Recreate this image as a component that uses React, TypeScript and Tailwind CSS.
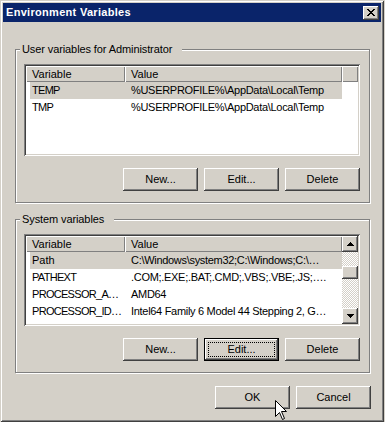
import React from "react";

const raised =
  "bg-[#d4d0c8] shadow-[inset_-1px_-1px_#404040,inset_1px_1px_#fff,inset_-2px_-2px_#808080,inset_2px_2px_#d4d0c8]";

type Row = { name: string; value: string };

const userRows: Row[] = [
  { name: "TEMP", value: "%USERPROFILE%\\AppData\\Local\\Temp" },
  { name: "TMP", value: "%USERPROFILE%\\AppData\\Local\\Temp" },
];

const systemRows: Row[] = [
  { name: "Path", value: "C:\\Windows\\system32;C:\\Windows;C:\\…" },
  { name: "PATHEXT", value: ".COM;.EXE;.BAT;.CMD;.VBS;.VBE;.JS;…." },
  { name: "PROCESSOR_A…", value: "AMD64" },
  { name: "PROCESSOR_ID…", value: "Intel64 Family 6 Model 44 Stepping 2, G…" },
];

function Button({ label, focused }: { label: string; focused?: boolean }) {
  if (focused) {
    return (
      <button
        type="button"
        className="relative flex h-[23px] w-[75px] items-center justify-center border border-black bg-[#d4d0c8] leading-[13px] shadow-[inset_-1px_-1px_#404040,inset_1px_1px_#fff,inset_-2px_-2px_#808080]"
      >
        <span className="pointer-events-none absolute inset-[3px] border border-dotted border-black" />
        {label}
      </button>
    );
  }
  return (
    <button
      type="button"
      className={`flex h-[23px] w-[75px] items-center justify-center leading-[13px] ${raised}`}
    >
      {label}
    </button>
  );
}

function HeaderCell({ label, className }: { label: string; className: string }) {
  return (
    <div
      className={`h-[16px] bg-[#d4d0c8] pl-[6px] leading-[16px] shadow-[inset_1px_1px_#fff,inset_-1px_-1px_#808080] ${className}`}
    >
      {label}
    </div>
  );
}

function ListRow({ row, selected }: { row: Row; selected: boolean }) {
  // Tahoma caps are narrower than Liberation Sans, so tighten upper-case names
  const caps = row.name === row.name.toUpperCase();
  return (
    <div className="flex h-[17px] w-[316px] leading-[17px]">
      <div
        className={
          selected
            ? "ml-[4px] flex w-[312px] bg-[#d4d0c8]"
            : "flex w-[316px]"
        }
      >
        <div
          className={`overflow-hidden whitespace-nowrap ${
            selected ? "w-[95px] pl-[2px]" : "w-[99px] pl-[6px]"
          } ${caps ? "tracking-[-0.7px]" : ""}`}
        >
          {row.name}
        </div>
        <div className="w-[217px] overflow-hidden whitespace-nowrap pl-[6px] tracking-[-0.3px]">
          {row.value}
        </div>
      </div>
    </div>
  );
}

function Arrow({ down }: { down?: boolean }) {
  return (
    <svg width="7" height="4" viewBox="0 0 7 4" shapeRendering="crispEdges">
      {down ? (
        <g fill="#000">
          <rect x="0" y="0" width="7" height="1" />
          <rect x="1" y="1" width="5" height="1" />
          <rect x="2" y="2" width="3" height="1" />
          <rect x="3" y="3" width="1" height="1" />
        </g>
      ) : (
        <g fill="#000">
          <rect x="3" y="0" width="1" height="1" />
          <rect x="2" y="1" width="3" height="1" />
          <rect x="1" y="2" width="5" height="1" />
          <rect x="0" y="3" width="7" height="1" />
        </g>
      )}
    </svg>
  );
}

function ScrollBar() {
  return (
    <div className="flex w-[16px] flex-col">
      <div className={`flex h-[16px] items-center justify-center ${raised}`}>
        <Arrow />
      </div>
      <div className="flex flex-1 flex-col bg-[repeating-conic-gradient(#d4d0c8_0_25%,#fff_0_50%)] bg-[length:2px_2px] pt-[14px]">
        <div className={`h-[13px] ${raised}`} />
      </div>
      <div className={`flex h-[16px] items-center justify-center ${raised}`}>
        <Arrow down />
      </div>
    </div>
  );
}

function ListView({ rows, scroll }: { rows: Row[]; scroll?: boolean }) {
  return (
    <div className="flex h-[92px] w-[336px] overflow-hidden bg-white p-[2px] shadow-[inset_1px_1px_#808080,inset_-1px_-1px_#fff,inset_2px_2px_#404040,inset_-2px_-2px_#d4d0c8]">
      <div className="flex flex-1 flex-col overflow-hidden">
        <div className="flex">
          <HeaderCell label="Variable" className="w-[99px]" />
          <HeaderCell label="Value" className="w-[217px]" />
          {!scroll && <HeaderCell label="" className="flex-1" />}
        </div>
        {rows.map((r, i) => (
          <ListRow key={r.name} row={r} selected={i === 0} />
        ))}
      </div>
      {scroll && <ScrollBar />}
    </div>
  );
}

function GroupBox({
  title,
  rows,
  scroll,
  focusEdit,
  className = "",
}: {
  title: string;
  rows: Row[];
  scroll?: boolean;
  focusEdit?: boolean;
  className?: string;
}) {
  return (
    <div
      className={`relative flex h-[154px] w-[355px] flex-col border border-[#808080] pl-[8px] pr-[9px] pt-[14px] shadow-[inset_1px_1px_#fff,1px_1px_#fff] ${className}`}
    >
      <span className="absolute left-[4px] top-[-7px] bg-[#d4d0c8] pl-[2px] pr-[10px] leading-[13px] tracking-[-0.1px]">
        {title}
      </span>
      <ListView rows={rows} scroll={scroll} />
      <div className="mt-[12px] flex justify-end gap-[6px]">
        <Button label="New..." />
        <Button label="Edit..." focused={focusEdit} />
        <Button label="Delete" />
      </div>
    </div>
  );
}

function CloseGlyph() {
  return (
    <svg width="8" height="7" viewBox="0 0 8 7" shapeRendering="crispEdges">
      <g fill="#000">
        <rect x="0" y="0" width="2" height="1" />
        <rect x="6" y="0" width="2" height="1" />
        <rect x="1" y="1" width="2" height="1" />
        <rect x="5" y="1" width="2" height="1" />
        <rect x="2" y="2" width="4" height="1" />
        <rect x="3" y="3" width="2" height="1" />
        <rect x="2" y="4" width="4" height="1" />
        <rect x="1" y="5" width="2" height="1" />
        <rect x="5" y="5" width="2" height="1" />
        <rect x="0" y="6" width="2" height="1" />
        <rect x="6" y="6" width="2" height="1" />
      </g>
    </svg>
  );
}

export default function App() {
  return (
    <div className="relative h-[422px] w-[385px] overflow-hidden bg-[#d4d0c8] font-['Liberation_Sans',Arial,sans-serif] text-[11px] text-black">
      <div className="flex h-[422px] w-[384px] flex-col p-[3px] shadow-[inset_1px_1px_#d4d0c8,inset_-1px_-1px_#404040,inset_2px_2px_#fff,inset_-2px_-2px_#808080]">
        {/* caption */}
        <div className="flex h-[19px] items-center justify-between bg-[#0a246a] pl-[3px] pr-[2px]">
          <span className="font-bold leading-[19px] tracking-[0.3px] text-white">
            Environment Variables
          </span>
          <div className={`flex h-[14px] w-[16px] items-center justify-center ${raised}`}>
            <CloseGlyph />
          </div>
        </div>

        <div className="flex flex-col pl-[12px] pt-[27px]">
          <GroupBox title="User variables for Administrator" rows={userRows} />
          <GroupBox
            title="System variables"
            rows={systemRows}
            scroll
            focusEdit
            className="mt-[16px]"
          />
          <div className="mt-[13px] flex w-[356px] justify-end gap-[6px]">
            <Button label="OK" />
            <Button label="Cancel" />
          </div>
        </div>
      </div>

      {/* mouse pointer */}
      <svg
        className="absolute left-[275px] top-[400px]"
        width="13"
        height="21"
        viewBox="0 0 13 21"
      >
        <polygon
          points="0.5,0.5 0.5,16.5 4.5,12.5 7.5,19.5 9.5,18.5 6.5,11.5 11.5,11.5"
          fill="#fff"
          stroke="#000"
          strokeWidth="1"
        />
      </svg>
    </div>
  );
}
